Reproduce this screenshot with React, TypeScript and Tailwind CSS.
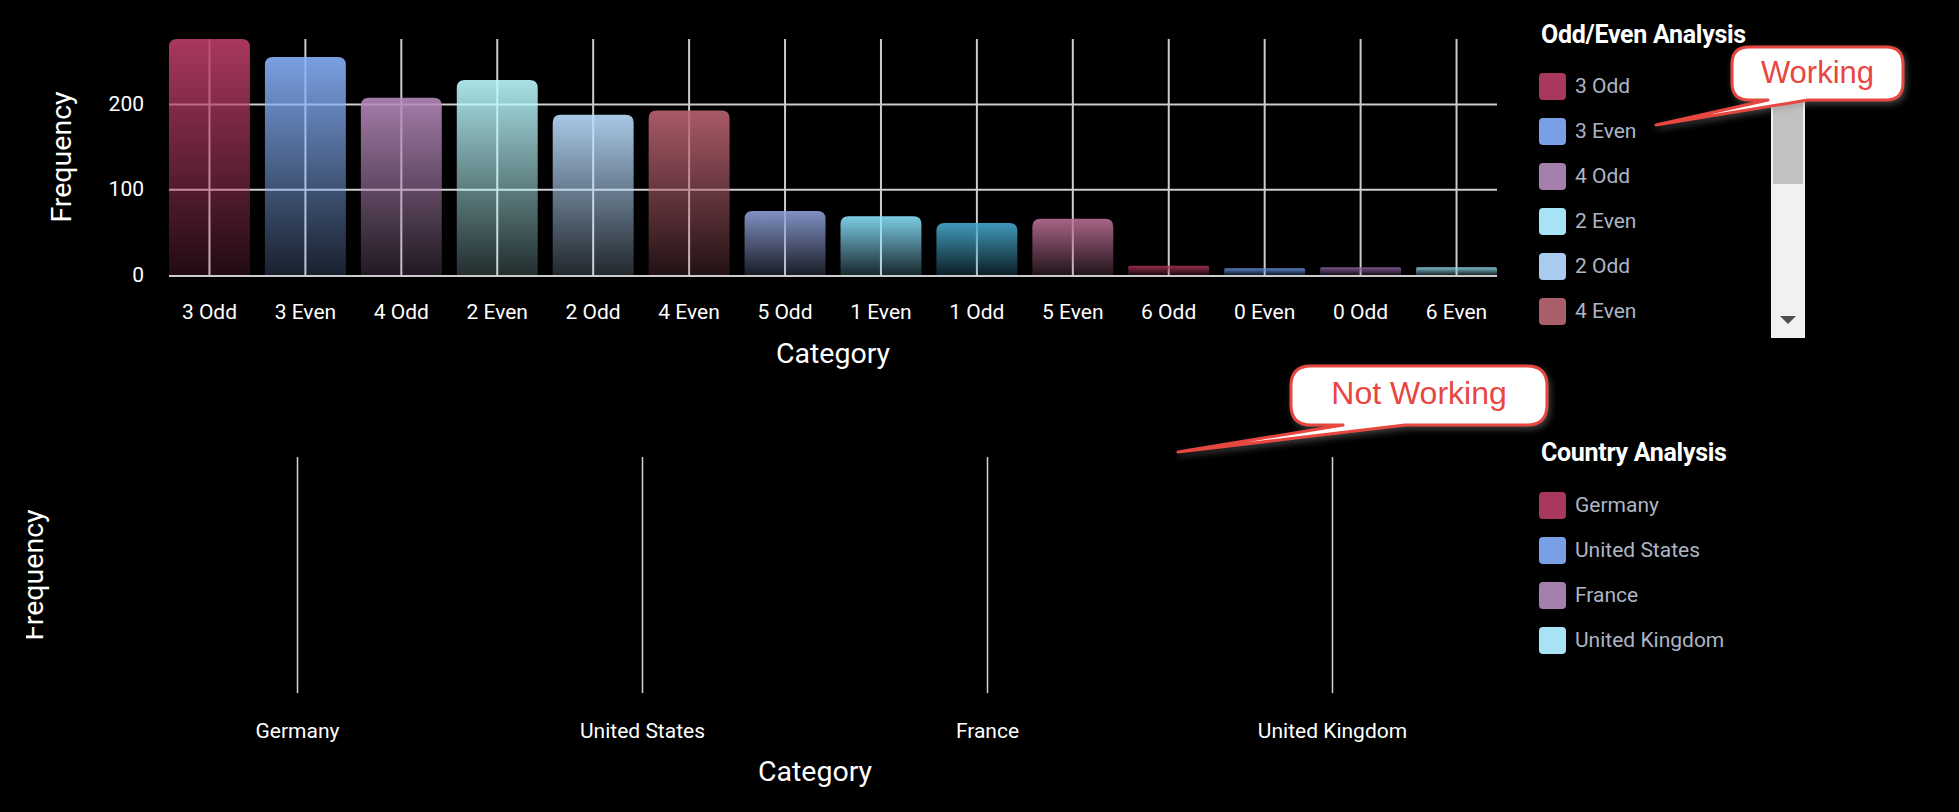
import React from 'react'

type Bar = { name: string; value: number; color: string }

const oddEven: Bar[] = [
  { name: '3 Odd', value: 277, color: '#a8385c' },
  { name: '3 Even', value: 256, color: '#7aa0e2' },
  { name: '4 Odd', value: 208, color: '#a47ca8' },
  { name: '2 Even', value: 229, color: '#a8e2f2' },
  { name: '2 Odd', value: 188, color: '#a8c8ee' },
  { name: '4 Even', value: 193, color: '#a85a66' },
  { name: '5 Odd', value: 75, color: '#8090c2' },
  { name: '1 Even', value: 69, color: '#7ccce8' },
  { name: '1 Odd', value: 61, color: '#4099ba' },
  { name: '5 Even', value: 66, color: '#a86486' },
  { name: '6 Odd', value: 11, color: '#962c4c' },
  { name: '0 Even', value: 8, color: '#5a80c4' },
  { name: '0 Odd', value: 9, color: '#765488' },
  { name: '6 Even', value: 9, color: '#7abccc' },
]

const legendOddEven = [
  { name: '3 Odd', color: '#a8385c' },
  { name: '3 Even', color: '#79a0e6' },
  { name: '4 Odd', color: '#a47fab' },
  { name: '2 Even', color: '#a8e3f5' },
  { name: '2 Odd', color: '#a9cbef' },
  { name: '4 Even', color: '#a95e69' },
  { name: '5 Odd', color: '#8090c2' },
  { name: '1 Even', color: '#7ccce8' },
]

const countries = [
  { name: 'Germany', color: '#a8385c' },
  { name: 'United States', color: '#79a0e6' },
  { name: 'France', color: '#a47fab' },
  { name: 'United Kingdom', color: '#a8e3f5' },
]

const PLOT_W = 1328
const PLOT_H = 236
const GAP = 15
const BAR_W = (PLOT_W - GAP * 13) / 14
const MAX = 277
const BAR_OPACITY = 0.9

// bars are drawn semi transparent over the grid, so lift the colour to keep the tone
function lift(hex: string) {
  const n = parseInt(hex.slice(1), 16)
  const ch = [(n >> 16) & 255, (n >> 8) & 255, n & 255].map((c) => Math.min(255, Math.round(c / BAR_OPACITY)))
  return `rgb(${ch[0]},${ch[1]},${ch[2]})`
}

function barPath(x: number, y: number, w: number, h: number, r: number) {
  const rr = Math.min(r, h, w / 2)
  return `M${x},${y + h} V${y + rr} Q${x},${y} ${x + rr},${y} H${x + w - rr} Q${x + w},${y} ${x + w},${y + rr} V${y + h} Z`
}

function OddEvenPlot() {
  const pitch = BAR_W + GAP
  return (
    <svg width={PLOT_W} height={PLOT_H + 2} className="block">
      <defs>
        {oddEven.map((b, i) => (
          <linearGradient key={b.name} id={`bar-${i}`} x1="0" y1="0" x2="0" y2="1">
            <stop offset="0" stopColor={lift(b.color)} stopOpacity={1} />
            <stop offset="1" stopColor={lift(b.color)} stopOpacity={0.2} />
          </linearGradient>
        ))}
      </defs>
      {[200, 100].map((v) => {
        const y = PLOT_H - (v / MAX) * PLOT_H
        return <line key={v} x1={0} x2={PLOT_W} y1={y} y2={y} stroke="#cccccc" strokeWidth={2} />
      })}
      {oddEven.map((b, i) => {
        const x = i * pitch + BAR_W / 2
        return <line key={b.name} x1={x} x2={x} y1={0} y2={PLOT_H} stroke="#cccccc" strokeWidth={2} />
      })}
      {oddEven.map((b, i) => {
        const h = (b.value / MAX) * PLOT_H
        return (
          <path
            key={b.name}
            d={barPath(i * pitch, PLOT_H - h, BAR_W, h, h > 30 ? 8 : 1.5)}
            fill={`url(#bar-${i})`}
            opacity={BAR_OPACITY}
          />
        )
      })}
      <line x1={0} x2={PLOT_W} y1={PLOT_H + 1} y2={PLOT_H + 1} stroke="#cccccc" strokeWidth={2} />
    </svg>
  )
}

function CountryPlot() {
  return (
    <svg width={1380} height={PLOT_H} className="block">
      {countries.map((c, i) => {
        const x = 172.5 + i * 345
        return <line key={c.name} x1={x} x2={x} y1={0} y2={PLOT_H} stroke="#d4d4d4" strokeWidth={1.5} />
      })}
    </svg>
  )
}

function YLabel() {
  return (
    <div className="flex w-[16px] justify-center">
      <span className="-rotate-90 whitespace-nowrap text-[28.5px] leading-[32px] text-white">Frequency</span>
    </div>
  )
}

type LegendItem = { name: string; color: string }

function LegendRows({ items }: { items: LegendItem[] }) {
  return (
    <>
      {items.map((item) => (
        <div key={item.name} className="flex h-[45px] items-center gap-[9px]">
          <span className="h-[27px] w-[27px] shrink-0 rounded-[4px]" style={{ backgroundColor: item.color }} />
          <span className="whitespace-nowrap text-[21px] leading-none text-[#adb5c4]">{item.name}</span>
        </div>
      ))}
    </>
  )
}

function Scrollbar() {
  return (
    <div className="flex h-[286px] w-[34px] flex-col bg-[#f1f1f1]">
      <div className="flex h-[32px] items-end justify-center pb-[8px]">
        <svg width="16" height="8">
          <polygon points="0,8 16,8 8,0" fill="#505050" />
        </svg>
      </div>
      <div className="mx-[2px] h-[100px] bg-[#c1c1c1]" />
      <div className="flex-1" />
      <div className="flex h-[30px] items-start justify-center pt-[8px]">
        <svg width="16" height="8">
          <polygon points="0,0 16,0 8,8" fill="#505050" />
        </svg>
      </div>
    </div>
  )
}

function Callout({
  box,
  tail,
  r,
}: {
  box: [number, number, number, number]
  tail: [number, number, number, number, number]
  r: number
}) {
  const [x0, y0, x1, y1] = box
  const [right, tipX, tipY, left] = tail
  const d = `M${x0 + r},${y0} H${x1 - r} Q${x1},${y0} ${x1},${y0 + r} V${y1 - r} Q${x1},${y1} ${x1 - r},${y1} H${right} L${tipX},${tipY} L${left},${y1} H${x0 + r} Q${x0},${y1} ${x0},${y1 - r} V${y0 + r} Q${x0},${y0} ${x0 + r},${y0} Z`
  return <path d={d} fill="#ffffff" stroke="#e8463f" strokeWidth={3} strokeLinejoin="round" filter="url(#callout-shadow)" />
}

export default function App() {
  return (
    <div className="relative h-[812px] w-[1959px] overflow-hidden bg-black font-['Roboto','Liberation_Sans',sans-serif] text-white">
      {/* odd / even chart */}
      <section className="flex h-[418px]">
        <div className="flex flex-col">
          <div className="flex items-start pt-[39px]">
            <div className="flex h-[236px] w-[100px] items-center pl-[54px]">
              <YLabel />
            </div>
            <div className="flex h-[236px] w-[44px] flex-col gap-[61.3px] pt-[53px] text-right text-[21px] leading-[24px]">
              <span>200</span>
              <span>100</span>
              <span>0</span>
            </div>
            <div className="ml-[25px]">
              <OddEvenPlot />
            </div>
          </div>
          <div className="ml-[169px] mt-[23px] flex gap-[15px]">
            {oddEven.map((b) => (
              <span key={b.name} className="w-[80.93px] whitespace-nowrap text-center text-[21px] leading-[24px]">
                {b.name}
              </span>
            ))}
          </div>
          <div className="ml-[169px] mt-[14px] w-[1328px] text-center text-[28.5px] leading-[32px]">Category</div>
        </div>

        <div className="ml-[42px] flex flex-col pt-[22px]">
          <div className="whitespace-nowrap pl-[2px] text-[25px] font-bold leading-[26px] tracking-[-0.3px]">Odd/Even Analysis</div>
          <div className="mt-[4px] flex h-[286px] w-[266px]">
            <div className="flex-1 overflow-hidden pt-[12px]">
              <LegendRows items={legendOddEven} />
            </div>
            <Scrollbar />
          </div>
        </div>
      </section>

      {/* country chart */}
      <section className="flex h-[394px]">
        <div className="flex flex-col">
          <div className="flex items-start pt-[39px]">
            <div className="ml-[26px] flex h-[236px] w-[99px] items-center overflow-hidden">
              <YLabel />
            </div>
            <CountryPlot />
          </div>
          <div className="ml-[125px] mt-[26px] flex">
            {countries.map((c) => (
              <span key={c.name} className="w-[345px] whitespace-nowrap text-center text-[21px] leading-[24px]">
                {c.name}
              </span>
            ))}
          </div>
          <div className="ml-[125px] mt-[13px] w-[1380px] text-center text-[28.5px] leading-[32px]">Category</div>
        </div>

        <div className="ml-[34px] flex flex-col pt-[22px]">
          <div className="whitespace-nowrap pl-[2px] text-[25px] font-bold leading-[26px] tracking-[-0.3px]">Country Analysis</div>
          <div className="mt-[4px] pt-[13px]">
            <LegendRows items={countries} />
          </div>
        </div>
      </section>

      {/* annotations */}
      <svg className="pointer-events-none absolute left-0 top-0" width={1959} height={812}>
        <defs>
          <filter id="callout-shadow" x="-20%" y="-40%" width="140%" height="180%">
            <feDropShadow dx="2" dy="3" stdDeviation="3" floodColor="#8a8a8a" floodOpacity="0.45" />
          </filter>
        </defs>
        <Callout box={[1732, 47, 1903, 100]} tail={[1808, 1656, 125, 1768]} r={17} />
        <Callout box={[1291, 366, 1547, 425]} tail={[1405, 1178, 452, 1343]} r={20} />
      </svg>
      <div className="absolute left-[1732px] top-[47px] flex h-[53px] w-[171px] items-center justify-center pb-[2px] font-['Liberation_Sans',sans-serif] text-[31px] leading-none text-[#e8463f]">
        Working
      </div>
      <div className="absolute left-[1291px] top-[366px] flex h-[59px] w-[256px] items-center justify-center pb-[5px] font-['Liberation_Sans',sans-serif] text-[32px] leading-none text-[#e8463f]">
        Not Working
      </div>
    </div>
  )
}
